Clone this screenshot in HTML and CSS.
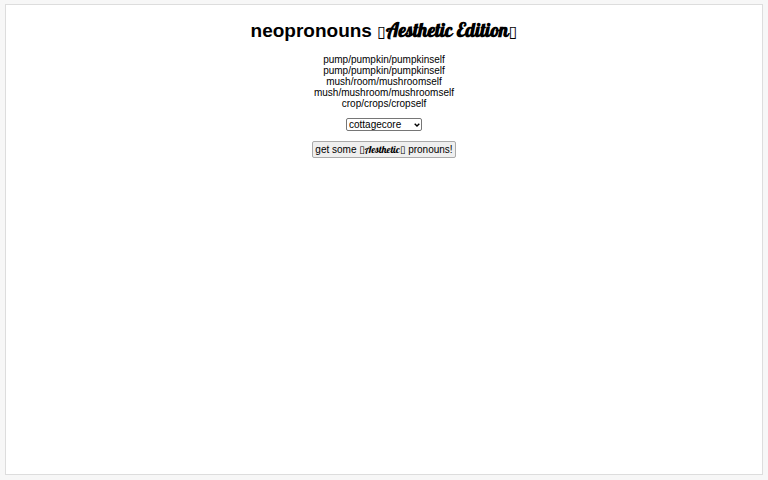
FILE: index.html
```html
<!DOCTYPE html>
<html lang="en">
<head>
<meta charset="utf-8">
<title>neopronouns</title>
<link rel="stylesheet" href="styles.css">
</head>
<body>
<main class="page">
<h1 class="title">neopronouns <span class="box">▯</span><span class="fancy">Aesthetic Edition</span><span class="box">▯</span></h1>
<p class="results">pump/pumpkin/pumpkinself<br>pump/pumpkin/pumpkinself<br>mush/room/mushroomself<br>mush/mushroom/mushroomself<br>crop/crops/cropself</p>
<div class="picker">
<select class="theme" aria-label="Theme"><option>cottagecore</option></select>
<svg class="arrow" viewBox="0 0 6 4" aria-hidden="true"><path d="M.7.7 3 3 5.3.7"/></svg>
</div>
<button class="generate" type="button">get some <span class="box">▯</span><span class="fancy">Aesthetic</span><span class="box">▯</span> pronouns!</button>
</main>
</body>
</html>
```

FILE: styles.css
```css
* { box-sizing: border-box; }
body { margin: 0; padding: 4px 5px 5px; min-height: 100vh; display: flex; background: #f7f7f7; color: #000; font: 10px/11px "Liberation Sans", sans-serif; }
.page { flex: 1; display: flex; flex-direction: column; align-items: center; background: #fff; border: 1px solid #ddd; padding: 12px 8px; text-align: center; }
.title { margin: 0; font-size: 19px; line-height: 26px; }
.fancy { font-family: Lobster, cursive; font-feature-settings: "liga" 0, "calt" 0; }
.box { font-family: "DejaVu Sans", sans-serif; font-weight: normal; }
.title .box { font-size: 16px; }
.results { margin: 9px 0; }
.picker { position: relative; width: 76px; }
.theme { appearance: none; display: block; width: 100%; height: 13px; padding: 0 2px; font: inherit; color: inherit; background: #fff; border: 1px solid #767676; border-radius: 2px; }
.arrow { position: absolute; right: 2px; top: 5px; width: 6px; height: 4px; fill: none; stroke: #000; stroke-width: 1.4; pointer-events: none; }
.generate { margin-top: 10px; height: 17px; padding: 0 2px; font: inherit; line-height: 15px; color: inherit; white-space: nowrap; background: #efefef; border: 1px solid #aaa; border-radius: 2px; }
```
